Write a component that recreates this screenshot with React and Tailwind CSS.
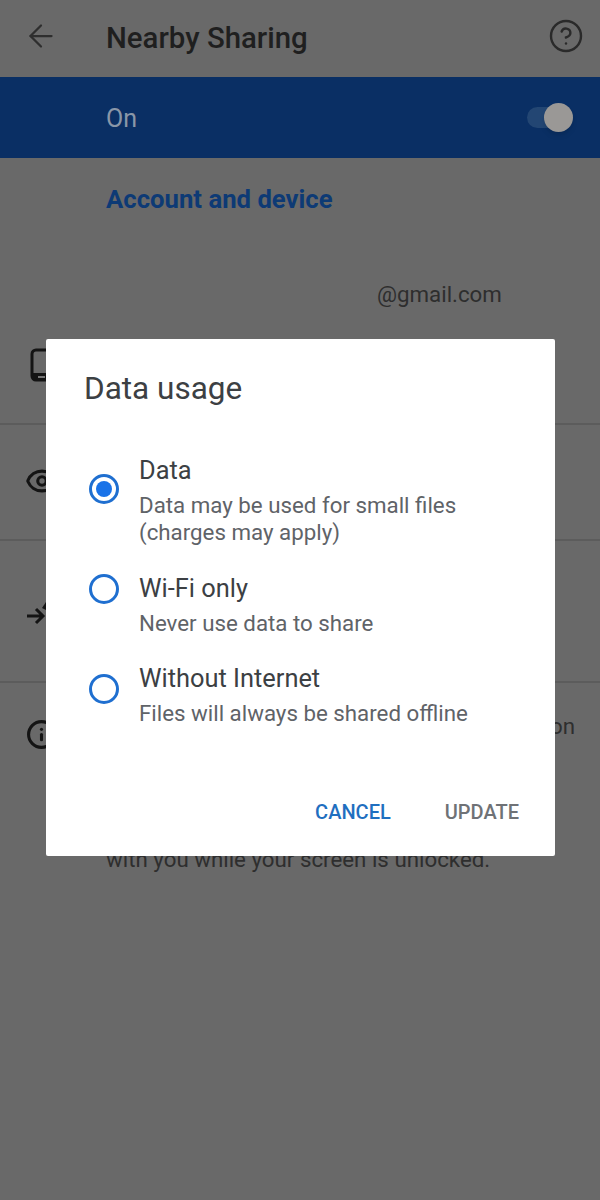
import React from 'react'
import { ArrowLeft, CircleHelp, Eye, Info } from 'lucide-react'

const options = [
  { title: 'Data', lines: ['Data may be used for small files', '(charges may apply)'], checked: true, height: 'h-[118px]', radioTop: 'pt-[20px]' },
  { title: 'Wi-Fi only', lines: ['Never use data to share'], checked: false, height: 'h-[90px]', radioTop: 'pt-[2px]' },
  { title: 'Without Internet', lines: ['Files will always be shared offline'], checked: false, height: 'h-[90px]', radioTop: 'pt-[12px]' },
]

function Radio({ checked }) {
  return (
    <div className="flex h-[30px] w-[30px] items-center justify-center rounded-full border-[3px] border-[#1f6fd0]">
      {checked && <div className="h-[16px] w-[16px] rounded-full bg-[#1a73e8]" />}
    </div>
  )
}

function DataDialog() {
  return (
    <div className="absolute left-[46px] top-[339px] flex h-[517px] w-[509px] flex-col rounded-[2px] bg-white">
      <h2 className="pl-[38px] pt-[32px] text-[31.5px] leading-[36px] text-[#3c4043]">Data usage</h2>
      <div className="mt-[47px] flex flex-col">
        {options.map((option) => (
          <div key={option.title} className={`flex ${option.height} pl-[43px]`}>
            <div className={option.radioTop}>
              <Radio checked={option.checked} />
            </div>
            <div className="pl-[20px]">
              <div className="text-[25.4px] leading-[32px] text-[#3c4043]">{option.title}</div>
              <div className="pt-[6px] text-[22.3px] leading-[27px] text-[#5f6368]">
                {option.lines.map((line) => (
                  <div key={line}>{line}</div>
                ))}
              </div>
            </div>
          </div>
        ))}
      </div>
      <div className="mt-auto flex justify-end gap-[54px] pb-[32px] pr-[36px] text-[20px] font-medium leading-[24px]">
        <span className="text-[#1f6fc0]">CANCEL</span>
        <span className="text-[#6f7276]">UPDATE</span>
      </div>
    </div>
  )
}

export default function App() {
  return (
    <div className="relative h-[1200px] w-[600px] overflow-hidden bg-[#696969] font-['Roboto',sans-serif]">
      <header className="flex h-[77px] items-center pb-[6px] pl-[23px] pr-[16px]">
        <ArrowLeft size={36} strokeWidth={1.5} className="text-[#2e2e2e]" />
        <h1 className="pl-[47px] pt-[6px] text-[29.4px] font-medium text-[#1f1f1f]">Nearby Sharing</h1>
        <CircleHelp size={36} strokeWidth={1.6} className="ml-auto text-[#2a2a2a]" />
      </header>

      <div className="flex h-[81px] items-center justify-between bg-[#0a2f64] pl-[106px] pr-[28px]">
        <span className="pt-[2px] text-[25px] text-[#8a97a8]">On</span>
        <div className="relative h-[21px] w-[45px] rounded-full bg-[#234673]">
          <div className="absolute right-[-1px] top-[-4px] h-[29px] w-[29px] rounded-full bg-[#9a9896] shadow-md" />
        </div>
      </div>

      <div className="pl-[106px] pt-[25px] text-[25.7px] font-bold leading-[32px] text-[#0d3a75]">Account and device</div>

      <div className="pl-[377px] pt-[65px] text-[22.3px] leading-[28px] text-[#2e2e2e]">@gmail.com</div>

      <div className="flex h-[117px] items-start border-b-2 border-[#5c5c5c] pl-[30px] pt-[40px]">
        <svg width="34" height="34" viewBox="0 0 34 34" fill="none">
          <rect x="2" y="2" width="30" height="30" rx="4" stroke="#141414" strokeWidth="3" />
          <rect x="2" y="25" width="30" height="7" fill="#141414" />
          <path d="M8 29h7" stroke="#777777" strokeWidth="2" />
        </svg>
      </div>
      <div className="flex h-[116px] items-start border-b-2 border-[#5c5c5c] pl-[25px] pt-[39px]">
        <Eye size={34} strokeWidth={2.2} className="text-[#141414]" />
      </div>
      <div className="flex h-[142px] items-start border-b-2 border-[#5c5c5c] pl-[27px] pt-[60px]">
        <svg width="24" height="24" viewBox="0 0 24 24" fill="none" stroke="#141414" strokeWidth="3">
          <path d="M0 15h15M9 8l7 7-7 7" />
          <polygon points="15,7 19,1 24,1 24,9 19,9" fill="#141414" stroke="none" />
        </svg>
      </div>
      <div className="relative h-[200px]">
        <Info size={31} strokeWidth={2.4} className="absolute left-[25.5px] top-[36px] text-[#141414]" />
        <span className="absolute left-[550px] top-[29px] text-[22.3px] leading-[28px] text-[#2e2e2e]">on</span>
        <span className="absolute left-[106px] top-[162px] text-[22.3px] leading-[28px] text-[#2e2e2e]">
          with you while your screen is unlocked.
        </span>
      </div>

      <DataDialog />
    </div>
  )
}
